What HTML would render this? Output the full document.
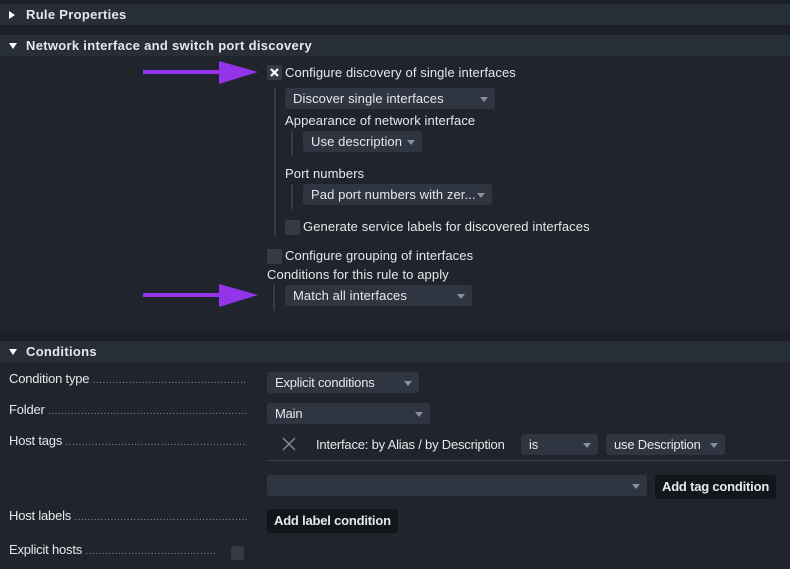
<!DOCTYPE html>
<html><head><style>
*{margin:0;padding:0;box-sizing:border-box}
body{width:790px;height:569px;background:#1b1f26;font-family:"Liberation Sans",sans-serif;font-size:13px;color:#e6e8ea;position:relative;overflow:hidden;letter-spacing:.1px}
.a{position:absolute;white-space:nowrap}
.hdr{position:absolute;left:0;width:790px;height:21px;background:#282e38;font-weight:bold;font-size:13px;line-height:21px;padding-left:26px;letter-spacing:.3px}
.body{position:absolute;left:0;width:790px;background:#20252d}
.dd{position:absolute;height:21px;background:#2f3641;border-radius:3px;line-height:21px;padding-left:8px;white-space:nowrap}
.dd:after{content:"";position:absolute;right:7px;top:9px;border-left:4px solid transparent;border-right:4px solid transparent;border-top:5px solid #8a9099}
.cb{position:absolute;width:15px;height:15px;background:#343b46;border-radius:2px}
.vl{position:absolute;width:2px;background:#363c46}
.n{font-size:13px;letter-spacing:-.2px}
.lbl{position:absolute;left:9px;width:238px;white-space:nowrap;overflow:hidden}
.lbl:after{content:" ........................................................................................................";color:#8a9099;font-size:10px;letter-spacing:.5px}
.btn{position:absolute;height:24px;background:#12161b;border-radius:3px;font-weight:bold;line-height:24px;padding:0 7px;white-space:nowrap}
.tri{position:absolute;left:9px;width:0;height:0}
</style></head><body>
<div class="hdr" style="top:4px">Rule Properties</div>
<div class="tri" style="top:11px;border-top:4px solid transparent;border-bottom:4px solid transparent;border-left:6px solid #fff"></div>
<div class="hdr" style="top:35px">Network interface and switch port discovery</div>
<div class="tri" style="top:43px;border-left:4px solid transparent;border-right:4px solid transparent;border-top:6px solid #fff"></div>
<div class="body" style="top:56px;height:275px"></div>
<svg class="a" style="left:143px;top:60px" width="115" height="25"><rect x="0" y="10" width="80" height="4" fill="#9333ea"/><polygon points="76,1 115,12 76,24" fill="#9333ea"/></svg>
<svg class="a" style="left:143px;top:283px" width="115" height="25"><rect x="0" y="10" width="80" height="4" fill="#9333ea"/><polygon points="76,1 115,12 76,24" fill="#9333ea"/></svg>
<div class="cb" style="left:267px;top:65px"></div>
<svg class="a" style="left:267px;top:65px" width="15" height="15"><path d="M4 4L11 11M11 4L4 11" stroke="#fff" stroke-width="2.2"/></svg>
<div class="a" style="left:285px;top:65px">Configure discovery of single interfaces</div>
<div class="vl" style="left:274px;top:88px;height:148px"></div>
<div class="dd" style="left:285px;top:88px;width:210px">Discover single interfaces</div>
<div class="a" style="left:285px;top:113px">Appearance of network interface</div>
<div class="vl" style="left:291px;top:131px;height:25px"></div>
<div class="dd" style="left:303px;top:131px;width:119px">Use description</div>
<div class="a" style="left:285px;top:166px">Port numbers</div>
<div class="vl" style="left:291px;top:184px;height:25px"></div>
<div class="dd" style="left:303px;top:184px;width:189px">Pad port numbers with zer...</div>
<div class="cb" style="left:285px;top:220px"></div>
<div class="a" style="left:303px;top:219px">Generate service labels for discovered interfaces</div>
<div class="cb" style="left:267px;top:249px"></div>
<div class="a" style="left:285px;top:248px">Configure grouping of interfaces</div>
<div class="a" style="left:267px;top:267px">Conditions for this rule to apply</div>
<div class="vl" style="left:273px;top:285px;height:26px"></div>
<div class="dd" style="left:285px;top:285px;width:187px">Match all interfaces</div>
<div class="hdr" style="top:341px">Conditions</div>
<div class="tri" style="top:349px;border-left:4px solid transparent;border-right:4px solid transparent;border-top:6px solid #fff"></div>
<div class="body" style="top:362px;height:207px"></div>
<div class="lbl n" style="top:371px">Condition type</div>
<div class="dd n" style="left:267px;top:372px;width:152px">Explicit conditions</div>
<div class="lbl n" style="top:402px">Folder</div>
<div class="dd n" style="left:267px;top:403px;width:163px">Main</div>
<div class="lbl n" style="top:433px">Host tags</div>
<svg class="a" style="left:282px;top:437px" width="14" height="14"><path d="M1 1L13 13M13 1L1 13" stroke="#8a9099" stroke-width="1.3"/></svg>
<div class="a n" style="left:316px;top:437px">Interface: by Alias / by Description</div>
<div class="dd n" style="left:521px;top:434px;width:77px">is</div>
<div class="dd n" style="left:606px;top:434px;width:119px">use Description</div>
<div class="a" style="left:267px;top:460px;width:523px;height:1px;background:#3a414c"></div>
<div class="dd" style="left:267px;top:475px;width:380px"></div>
<div class="btn n" style="left:655px;top:475px">Add tag condition</div>
<div class="lbl n" style="top:508px">Host labels</div>
<div class="btn n" style="left:267px;top:509px">Add label condition</div>
<div class="lbl n" style="top:542px;width:208px">Explicit hosts</div>
<div class="a" style="left:231px;top:546px;width:13px;height:14px;background:#343b46;border-radius:2px"></div>
</body></html>
